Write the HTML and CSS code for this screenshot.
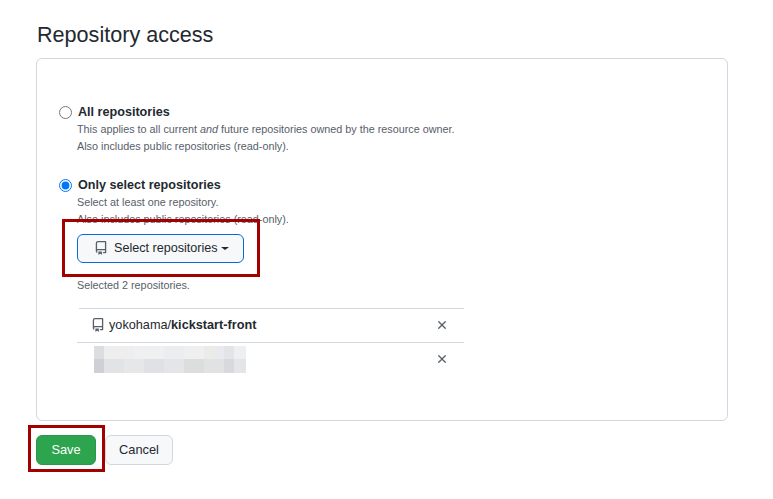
FILE: index.html
```html
<!DOCTYPE html>
<html lang="en">
<head>
  <meta charset="UTF-8" />
  <title>Repository access</title>
  <link rel="stylesheet" href="styles.css">
</head>
<body>
  <h2 class="title">Repository access</h2>
  <div class="box">
    <div class="option">
      <label class="option-label"><input class="radio" type="radio" name="access">All repositories</label>
      <p class="note">This applies to all current <em>and</em> future repositories owned by the resource owner.</p>
      <p class="note">Also includes public repositories (read-only).</p>
    </div>
    <div class="option option-select">
      <label class="option-label"><input class="radio" type="radio" name="access" checked>Only select repositories</label>
      <p class="note">Select at least one repository.</p>
      <p class="note">Also includes public repositories (read-only).</p>
      <button class="select-btn" type="button">
        <svg class="repo-icon" viewBox="0 0 16 16" width="16" height="16"><path d="M2 2.5A2.5 2.5 0 0 1 4.5 0h8.75a.75.75 0 0 1 .75.75v12.5a.75.75 0 0 1-.75.75h-2.5a.75.75 0 0 1 0-1.5h1.75v-2h-8a1 1 0 0 0-.714 1.7.75.75 0 1 1-1.072 1.05A2.495 2.495 0 0 1 2 11.5Zm10.5-1h-8a1 1 0 0 0-1 1v6.708A2.486 2.486 0 0 1 4.5 9h8ZM5 12.25a.25.25 0 0 1 .25-.25h3.5a.25.25 0 0 1 .25.25v3.25a.25.25 0 0 1-.4.2l-1.45-1.087a.249.249 0 0 0-.3 0L5.4 15.7a.25.25 0 0 1-.4-.2Z"></path></svg>
        Select repositories
        <span class="caret"></span>
      </button>
      <p class="note selected-count">Selected 2 repositories.</p>
      <ul class="repo-list">
        <li class="repo-row repo-row-first">
          <span class="repo-name">
            <svg class="repo-icon" viewBox="0 0 16 16" width="14" height="14"><path d="M2 2.5A2.5 2.5 0 0 1 4.5 0h8.75a.75.75 0 0 1 .75.75v12.5a.75.75 0 0 1-.75.75h-2.5a.75.75 0 0 1 0-1.5h1.75v-2h-8a1 1 0 0 0-.714 1.7.75.75 0 1 1-1.072 1.05A2.495 2.495 0 0 1 2 11.5Zm10.5-1h-8a1 1 0 0 0-1 1v6.708A2.486 2.486 0 0 1 4.5 9h8ZM5 12.25a.25.25 0 0 1 .25-.25h3.5a.25.25 0 0 1 .25.25v3.25a.25.25 0 0 1-.4.2l-1.45-1.087a.249.249 0 0 0-.3 0L5.4 15.7a.25.25 0 0 1-.4-.2Z"></path></svg>
            <span>yokohama/<b>kickstart-front</b></span>
          </span>
          <svg class="close-icon" viewBox="0 0 16 16" width="16" height="16"><path d="M3.72 3.72a.75.75 0 0 1 1.06 0L8 6.94l3.22-3.22a.749.749 0 0 1 1.06 1.06L9.06 8l3.22 3.22a.749.749 0 0 1-1.06 1.06L8 9.06l-3.22 3.22a.749.749 0 0 1-1.06-1.06L6.94 8 3.72 4.78a.75.75 0 0 1 0-1.06Z"></path></svg>
        </li>
        <li class="repo-row repo-row-hidden">
          <div class="blur-patch"></div>
          <svg class="close-icon" viewBox="0 0 16 16" width="16" height="16"><path d="M3.72 3.72a.75.75 0 0 1 1.06 0L8 6.94l3.22-3.22a.749.749 0 0 1 1.06 1.06L9.06 8l3.22 3.22a.749.749 0 0 1-1.06 1.06L8 9.06l-3.22 3.22a.749.749 0 0 1-1.06-1.06L6.94 8 3.72 4.78a.75.75 0 0 1 0-1.06Z"></path></svg>
        </li>
      </ul>
    </div>
  </div>
  <div class="actions">
    <button class="btn btn-save" type="button">Save</button>
    <button class="btn btn-cancel" type="button">Cancel</button>
  </div>

  <!-- red annotation boxes drawn over the screenshot -->
  <div class="mark mark-select"></div>
  <div class="mark mark-save"></div>
</body>
</html>
```

FILE: styles.css
```css
/* Global Styles */
* {
  box-sizing: border-box;
}
body {
  font-family: "Liberation Sans", Arial, sans-serif;
  background-color: #fff;
  color: #24292f;
  margin: 0;
  padding: 21px 45px 0 36px;
  position: relative;
  height: 499px;
  overflow: hidden;
}
.title {
  font-size: 21.6px;
  font-weight: 400;
  line-height: 27px;
  margin: 0 0 10px;
  padding-left: 1px;
}

/* Main box */
.box {
  border: 1px solid #d0d7de;
  border-radius: 6px;
  height: 363px;
  padding: 45px 22px 0;
}
.option-label {
  display: flex;
  align-items: center;
  gap: 6px;
  font-size: 12.6px;
  font-weight: bold;
  line-height: 17px;
}
.radio {
  width: 13px;
  height: 13px;
  margin: 0 0 1px;
  flex: none;
}
.note {
  font-size: 10.8px;
  line-height: 17px;
  color: #57606a;
  margin: 0 0 0 18px;
}
.option-select {
  margin-top: 22px;
}

/* Select button */
.select-btn {
  display: flex;
  align-items: center;
  gap: 6px;
  width: 167px;
  height: 29px;
  margin: 6px 0 0 18px;
  padding: 0 0 2px 16px;
  background-color: #f6f8fa;
  border: 1px solid #0969da;
  border-radius: 6px;
  color: #24292f;
  font-family: inherit;
  font-size: 12.6px;
}
.repo-icon {
  fill: #57606a;
  flex: none;
}
.select-btn .repo-icon {
  width: 14px;
  height: 14px;
  margin-top: 1px;
}
.caret {
  border-top: 3px solid #24292f;
  border-left: 4px solid transparent;
  border-right: 4px solid transparent;
  margin-left: -3px;
  margin-top: 2px;
}
.selected-count {
  margin-top: 14px;
}

/* Repo list */
.repo-list {
  list-style: none;
  margin: 14px 0 0 18px;
  padding: 0;
  width: 387px;
}
.repo-row {
  display: flex;
  align-items: center;
  justify-content: space-between;
  height: 34px;
  border-top: 1px solid #d0d7de;
  padding-right: 15px;
}
.repo-row-first {
  margin-left: 2px;
}
.repo-name {
  display: flex;
  align-items: center;
  gap: 4px;
  font-size: 12.7px;
  padding-left: 12px;
  margin-bottom: 2px;
}
.close-icon {
  fill: #57606a;
  width: 14px;
  height: 14px;
  margin-bottom: 2px;
}

/* Pixelated patch that hides the second repository name */
.blur-patch {
  width: 152px;
  height: 27px;
  margin-left: 17px;
  background:
    linear-gradient(90deg,
      #cfd0d5 0 10px, #e2e3e5 10px 30px, #e6e7e8 30px 50px, #dfe1e4 50px 70px,
      #e3e5e6 70px 90px, #dcdddd 90px 110px, #e0e2e4 110px 130px, #d8d9dc 130px 140px, #e4e5e6 140px)
      0 100% / 100% 14px no-repeat,
    linear-gradient(90deg,
      #dcdde0 0 10px, #eeeeef 10px 30px, #f0eeec 30px 40px, #eff0f1 40px 70px,
      #ecedef 70px 90px, #efeff0 90px 110px, #ecebe8 110px 120px, #e8eaee 120px 130px, #e3e4e6 130px 140px, #eeeff0 140px);
}

/* Actions */
.actions {
  display: flex;
  gap: 9px;
  margin-top: 14px;
}
.btn {
  height: 30px;
  padding: 0 0 2px;
  border-radius: 6px;
  font-family: inherit;
  font-size: 12.8px;
}
.btn-save {
  width: 60px;
  background-color: #2da44e;
  border: 1px solid #2c974b;
  color: #fff;
}
.btn-cancel {
  width: 68px;
  background-color: #f6f8fa;
  border: 1px solid #d0d7de;
  color: #24292f;
}

/* Annotations */
.mark {
  position: absolute;
  border: 3px solid #a30000;
}
.mark-select {
  left: 62px;
  top: 219px;
  width: 198px;
  height: 58px;
}
.mark-save {
  left: 28px;
  top: 425px;
  width: 77px;
  height: 47px;
}
```
